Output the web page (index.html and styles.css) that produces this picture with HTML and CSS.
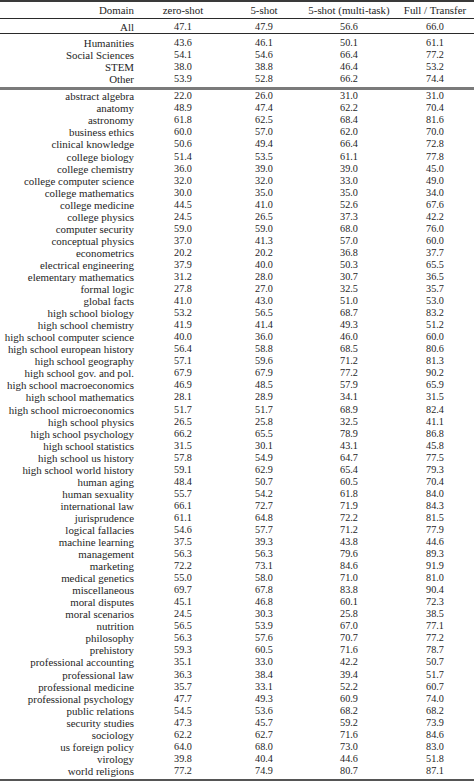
FILE: index.html
```html
<!DOCTYPE html>
<html>
<head>
<meta charset="utf-8">
<link rel="stylesheet" href="styles.css">
</head>
<body>
<div class="table">
  <div class="sec head">
    <div class="row"><span class="lab">Domain</span><span class="h">zero-shot</span><span class="h">5-shot</span><span class="h">5-shot (multi-task)</span><span class="h">Full / Transfer</span></div>
  </div>
  <div class="sec all">
    <div class="row"><span class="lab">All</span><span>47.1</span><span>47.9</span><span>56.6</span><span>66.0</span></div>
  </div>
  <div class="sec groups">
    <div class="row"><span class="lab">Humanities</span><span>43.6</span><span>46.1</span><span>50.1</span><span>61.1</span></div>
    <div class="row"><span class="lab">Social Sciences</span><span>54.1</span><span>54.6</span><span>66.4</span><span>77.2</span></div>
    <div class="row"><span class="lab">STEM</span><span>38.0</span><span>38.8</span><span>46.4</span><span>53.2</span></div>
    <div class="row"><span class="lab">Other</span><span>53.9</span><span>52.8</span><span>66.2</span><span>74.4</span></div>
  </div>
  <div class="sec subjects">
    <div class="row"><span class="lab">abstract algebra</span><span>22.0</span><span>26.0</span><span>31.0</span><span>31.0</span></div>
    <div class="row"><span class="lab">anatomy</span><span>48.9</span><span>47.4</span><span>62.2</span><span>70.4</span></div>
    <div class="row"><span class="lab">astronomy</span><span>61.8</span><span>62.5</span><span>68.4</span><span>81.6</span></div>
    <div class="row"><span class="lab">business ethics</span><span>60.0</span><span>57.0</span><span>62.0</span><span>70.0</span></div>
    <div class="row"><span class="lab">clinical knowledge</span><span>50.6</span><span>49.4</span><span>66.4</span><span>72.8</span></div>
    <div class="row"><span class="lab">college biology</span><span>51.4</span><span>53.5</span><span>61.1</span><span>77.8</span></div>
    <div class="row"><span class="lab">college chemistry</span><span>36.0</span><span>39.0</span><span>39.0</span><span>45.0</span></div>
    <div class="row"><span class="lab">college computer science</span><span>32.0</span><span>32.0</span><span>33.0</span><span>49.0</span></div>
    <div class="row"><span class="lab">college mathematics</span><span>30.0</span><span>35.0</span><span>35.0</span><span>34.0</span></div>
    <div class="row"><span class="lab">college medicine</span><span>44.5</span><span>41.0</span><span>52.6</span><span>67.6</span></div>
    <div class="row"><span class="lab">college physics</span><span>24.5</span><span>26.5</span><span>37.3</span><span>42.2</span></div>
    <div class="row"><span class="lab">computer security</span><span>59.0</span><span>59.0</span><span>68.0</span><span>76.0</span></div>
    <div class="row"><span class="lab">conceptual physics</span><span>37.0</span><span>41.3</span><span>57.0</span><span>60.0</span></div>
    <div class="row"><span class="lab">econometrics</span><span>20.2</span><span>20.2</span><span>36.8</span><span>37.7</span></div>
    <div class="row"><span class="lab">electrical engineering</span><span>37.9</span><span>40.0</span><span>50.3</span><span>65.5</span></div>
    <div class="row"><span class="lab">elementary mathematics</span><span>31.2</span><span>28.0</span><span>30.7</span><span>36.5</span></div>
    <div class="row"><span class="lab">formal logic</span><span>27.8</span><span>27.0</span><span>32.5</span><span>35.7</span></div>
    <div class="row"><span class="lab">global facts</span><span>41.0</span><span>43.0</span><span>51.0</span><span>53.0</span></div>
    <div class="row"><span class="lab">high school biology</span><span>53.2</span><span>56.5</span><span>68.7</span><span>83.2</span></div>
    <div class="row"><span class="lab">high school chemistry</span><span>41.9</span><span>41.4</span><span>49.3</span><span>51.2</span></div>
    <div class="row"><span class="lab">high school computer science</span><span>40.0</span><span>36.0</span><span>46.0</span><span>60.0</span></div>
    <div class="row"><span class="lab">high school european history</span><span>56.4</span><span>58.8</span><span>68.5</span><span>80.6</span></div>
    <div class="row"><span class="lab">high school geography</span><span>57.1</span><span>59.6</span><span>71.2</span><span>81.3</span></div>
    <div class="row"><span class="lab">high school gov. and pol.</span><span>67.9</span><span>67.9</span><span>77.2</span><span>90.2</span></div>
    <div class="row"><span class="lab">high school macroeconomics</span><span>46.9</span><span>48.5</span><span>57.9</span><span>65.9</span></div>
    <div class="row"><span class="lab">high school mathematics</span><span>28.1</span><span>28.9</span><span>34.1</span><span>31.5</span></div>
    <div class="row"><span class="lab">high school microeconomics</span><span>51.7</span><span>51.7</span><span>68.9</span><span>82.4</span></div>
    <div class="row"><span class="lab">high school physics</span><span>26.5</span><span>25.8</span><span>32.5</span><span>41.1</span></div>
    <div class="row"><span class="lab">high school psychology</span><span>66.2</span><span>65.5</span><span>78.9</span><span>86.8</span></div>
    <div class="row"><span class="lab">high school statistics</span><span>31.5</span><span>30.1</span><span>43.1</span><span>45.8</span></div>
    <div class="row"><span class="lab">high school us history</span><span>57.8</span><span>54.9</span><span>64.7</span><span>77.5</span></div>
    <div class="row"><span class="lab">high school world history</span><span>59.1</span><span>62.9</span><span>65.4</span><span>79.3</span></div>
    <div class="row"><span class="lab">human aging</span><span>48.4</span><span>50.7</span><span>60.5</span><span>70.4</span></div>
    <div class="row"><span class="lab">human sexuality</span><span>55.7</span><span>54.2</span><span>61.8</span><span>84.0</span></div>
    <div class="row"><span class="lab">international law</span><span>66.1</span><span>72.7</span><span>71.9</span><span>84.3</span></div>
    <div class="row"><span class="lab">jurisprudence</span><span>61.1</span><span>64.8</span><span>72.2</span><span>81.5</span></div>
    <div class="row"><span class="lab">logical fallacies</span><span>54.6</span><span>57.7</span><span>71.2</span><span>77.9</span></div>
    <div class="row"><span class="lab">machine learning</span><span>37.5</span><span>39.3</span><span>43.8</span><span>44.6</span></div>
    <div class="row"><span class="lab">management</span><span>56.3</span><span>56.3</span><span>79.6</span><span>89.3</span></div>
    <div class="row"><span class="lab">marketing</span><span>72.2</span><span>73.1</span><span>84.6</span><span>91.9</span></div>
    <div class="row"><span class="lab">medical genetics</span><span>55.0</span><span>58.0</span><span>71.0</span><span>81.0</span></div>
    <div class="row"><span class="lab">miscellaneous</span><span>69.7</span><span>67.8</span><span>83.8</span><span>90.4</span></div>
    <div class="row"><span class="lab">moral disputes</span><span>45.1</span><span>46.8</span><span>60.1</span><span>72.3</span></div>
    <div class="row"><span class="lab">moral scenarios</span><span>24.5</span><span>30.3</span><span>25.8</span><span>38.5</span></div>
    <div class="row"><span class="lab">nutrition</span><span>56.5</span><span>53.9</span><span>67.0</span><span>77.1</span></div>
    <div class="row"><span class="lab">philosophy</span><span>56.3</span><span>57.6</span><span>70.7</span><span>77.2</span></div>
    <div class="row"><span class="lab">prehistory</span><span>59.3</span><span>60.5</span><span>71.6</span><span>78.7</span></div>
    <div class="row"><span class="lab">professional accounting</span><span>35.1</span><span>33.0</span><span>42.2</span><span>50.7</span></div>
    <div class="row"><span class="lab">professional law</span><span>36.3</span><span>38.4</span><span>39.4</span><span>51.7</span></div>
    <div class="row"><span class="lab">professional medicine</span><span>35.7</span><span>33.1</span><span>52.2</span><span>60.7</span></div>
    <div class="row"><span class="lab">professional psychology</span><span>47.7</span><span>49.3</span><span>60.9</span><span>74.0</span></div>
    <div class="row"><span class="lab">public relations</span><span>54.5</span><span>53.6</span><span>68.2</span><span>68.2</span></div>
    <div class="row"><span class="lab">security studies</span><span>47.3</span><span>45.7</span><span>59.2</span><span>73.9</span></div>
    <div class="row"><span class="lab">sociology</span><span>62.2</span><span>62.7</span><span>71.6</span><span>84.6</span></div>
    <div class="row"><span class="lab">us foreign policy</span><span>64.0</span><span>68.0</span><span>73.0</span><span>83.0</span></div>
    <div class="row"><span class="lab">virology</span><span>39.8</span><span>40.4</span><span>44.6</span><span>51.8</span></div>
    <div class="row"><span class="lab">world religions</span><span>77.2</span><span>74.9</span><span>80.7</span><span>87.1</span></div>
  </div>
</div>
</body>
</html>
```

FILE: styles.css
```css
html, body {
  margin: 0;
  padding: 0;
  background: #ffffff;
}

.table {
  width: 474px;
  font-family: "Liberation Serif", "Times New Roman", serif;
  color: #1e1e1e;
  border-top: 2px solid #3a3a3a;
  border-bottom: 2.5px solid #555555;
}

.row {
  display: grid;
  grid-template-columns: 134px 98px 64px 106px 66px;
  height: 12px;
  line-height: 12px;
  font-size: 10.2px;
  white-space: nowrap;
}

.row span {
  text-align: center;
}

.row .lab,
.row .h {
  font-size: 10.9px;
}

.row .lab {
  text-align: right;
}

.head {
  padding-top: 1.8px;
  padding-bottom: 2.2px;
  border-bottom: 1px solid #2a2a2a;
}

.all {
  padding-top: 2px;
  padding-bottom: 0.5px;
  border-bottom: 1.2px solid #2a2a2a;
}

.groups {
  padding-top: 3px;
  padding-bottom: 1.8px;
  border-bottom: 3px solid #7a7a7a;
}

.subjects {
  padding-top: 0;
  padding-bottom: 2px;
}

.subjects .row {
  height: 12.05px;
  line-height: 12.05px;
}
```
